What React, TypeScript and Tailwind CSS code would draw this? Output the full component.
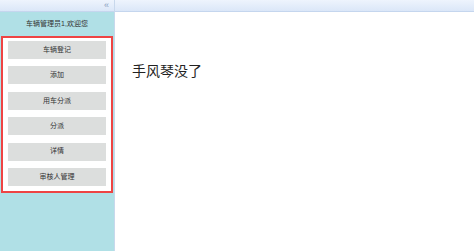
import React from 'react';

const items = ['车辆登记', '添加', '用车分派', '分派', '详情', '审核人管理'];

export default function App() {
  return (
    <div
      className="flex h-[251px] w-[474px] overflow-hidden bg-white text-[#333]"
      style={{ fontFamily: '"Liberation Sans", "Noto Sans CJK SC", sans-serif' }}
    >
      <div className="flex w-[114px] flex-col bg-[#b0e0e6]">
        <div className="flex h-[12px] items-center justify-end border-b border-[#c5d6ee] bg-gradient-to-b from-[#eef4fd] to-[#dbe7f8] pr-[5px] text-[9px] leading-none text-[#8aa0c0]">
          «
        </div>
        <div className="flex h-[24px] items-center justify-center text-[7px] text-[#333]">
          车辆管理员1,欢迎您
        </div>
        <div className="mx-[1px] flex h-[157px] flex-col gap-[7.4px] border-2 border-[#ee4444] bg-white px-[5px] pt-[3px]">
          {items.map((t) => (
            <div
              key={t}
              className="flex h-[18px] shrink-0 items-center justify-center bg-[#dcdedd] text-[7px] text-[#333]"
            >
              {t}
            </div>
          ))}
        </div>
      </div>
      <div className="flex flex-1 flex-col border-l border-[#c8d8ec]">
        <div className="h-[12px] border-b border-[#c5d6ee] bg-gradient-to-b from-[#eef4fd] to-[#dbe7f8]" />
        <div className="pl-[17px] pt-[52px] text-[14px] leading-none text-[#222]">手风琴没了</div>
      </div>
    </div>
  );
}
